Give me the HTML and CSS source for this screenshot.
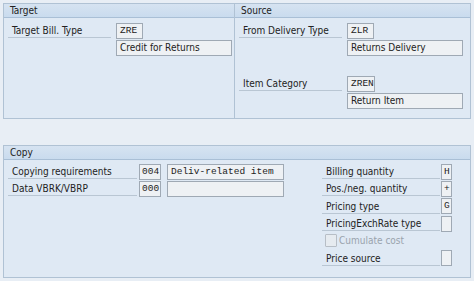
FILE: index.html
```html
<!DOCTYPE html>
<html lang="en">
<head>
    <meta charset="UTF-8">
    <title>Copying Control</title>
    <link rel="stylesheet" href="styles.css">
</head>
<body>
    <div class="top">
        <section class="group target">
            <div class="group-title">Target</div>
            <div class="group-body">
                <div class="row">
                    <span class="label">Target Bill. Type</span>
                    <span class="field code w-short">ZRE</span>
                </div>
                <div class="row">
                    <span class="spacer"></span>
                    <span class="field text w-long">Credit for Returns</span>
                </div>
            </div>
        </section>
        <section class="group source">
            <div class="group-title">Source</div>
            <div class="group-body">
                <div class="row">
                    <span class="label">From Delivery Type</span>
                    <span class="field code w-short">ZLR</span>
                </div>
                <div class="row">
                    <span class="spacer"></span>
                    <span class="field text w-long">Returns Delivery</span>
                </div>
                <div class="row"></div>
                <div class="row">
                    <span class="label">Item Category</span>
                    <span class="field code w-short2">ZREN</span>
                </div>
                <div class="row">
                    <span class="spacer"></span>
                    <span class="field text w-long">Return Item</span>
                </div>
            </div>
        </section>
    </div>

    <section class="group copy">
        <div class="group-title">Copy</div>
        <div class="copy-body">
            <div class="copy-left">
                <div class="row">
                    <span class="label">Copying requirements</span>
                    <span class="field code w-num">004</span>
                    <span class="field code w-desc">Deliv-related item</span>
                </div>
                <div class="row">
                    <span class="label">Data VBRK/VBRP</span>
                    <span class="field code w-num">000</span>
                    <span class="field code w-desc"></span>
                </div>
            </div>
            <div class="copy-right">
                <div class="row">
                    <span class="label">Billing quantity</span>
                    <span class="field code w-char">H</span>
                </div>
                <div class="row">
                    <span class="label">Pos./neg. quantity</span>
                    <span class="field code w-char">+</span>
                </div>
                <div class="row">
                    <span class="label">Pricing type</span>
                    <span class="field code w-char">G</span>
                </div>
                <div class="row">
                    <span class="label">PricingExchRate type</span>
                    <span class="field code w-char"></span>
                </div>
                <div class="row">
                    <label class="check disabled"><span class="box"></span>Cumulate cost</label>
                </div>
                <div class="row">
                    <span class="label">Price source</span>
                    <span class="field code w-char"></span>
                </div>
            </div>
        </div>
    </section>
</body>
</html>
```

FILE: styles.css
```css
body {
    margin: 0;
    padding: 3px 3px 0 3px;
    width: 468px;
    height: 278px;
    background-color: #e8eef5;
    font-family: "DejaVu Sans Condensed", "Liberation Sans", sans-serif;
    font-size: 10px;
    color: #222222;
    overflow: hidden;
}

.top {
    display: flex;
    height: 116px;
}

.group {
    background-color: #dfe9f4;
    border: 1px solid #b0c2d4;
    box-sizing: border-box;
}

.target {
    width: 232px;
}

.source {
    width: 236px;
    border-left: none;
}

.group-title {
    height: 13px;
    line-height: 13px;
    padding-left: 6px;
    background: linear-gradient(#d6e3f1, #c9dbee);
    border-bottom: 1px solid #a9bfd6;
}

.group-body {
    padding: 4px 0 0 4px;
}

.row {
    display: flex;
    align-items: center;
    height: 17.6px;
}

.label {
    width: 103px;
    margin-right: 5px;
    padding-left: 4px;
    box-sizing: border-box;
    border-bottom: 1px solid #b9c6d3;
    height: 15px;
    line-height: 15px;
    white-space: nowrap;
}

.spacer {
    width: 108px;
}

.field {
    box-sizing: border-box;
    height: 16px;
    line-height: 14px;
    border: 1px solid #9fa9b4;
    background-color: #eef1f4;
    padding-left: 3px;
    white-space: nowrap;
    overflow: hidden;
}

.code {
    font-family: "Liberation Mono", "Courier New", monospace;
    font-size: 9.5px;
}

.text {
    font-size: 10px;
}

.w-short {
    width: 27px;
}

.w-short2 {
    width: 28px;
}

.w-long {
    width: 116px;
}

.copy {
    margin-top: 26px;
    height: 133px;
    width: 468px;
}

.copy-body {
    display: flex;
    padding: 3px 0 0 4px;
}

.copy-body .row {
    height: 17.3px;
}

.copy-left .label {
    width: 129px;
    margin-right: 2px;
}

.copy-left .field {
    margin-right: 6px;
}

.w-num {
    width: 22px;
    padding-left: 2px;
}

.w-desc {
    width: 117px;
}

.copy-right {
    margin-left: 32px;
}

.copy-right .label {
    width: 118px;
    margin-right: 1px;
}

.w-char {
    width: 11px;
    padding-left: 2px;
}

.check {
    display: flex;
    align-items: center;
    padding-left: 3px;
}

.check .box {
    width: 10px;
    height: 11px;
    border: 1px solid #b7bec6;
    border-radius: 1px;
    background-color: #e6ebf0;
    margin-right: 2px;
}

.check.disabled {
    color: #9aa3ad;
}
```
